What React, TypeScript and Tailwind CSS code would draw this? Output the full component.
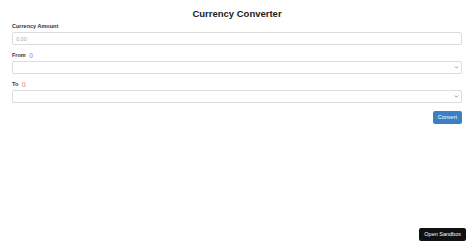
import { ChevronDown } from "lucide-react";

const font = { fontFamily: '"Liberation Sans", Arial, Helvetica, sans-serif' };

function Field({ children }: { children: React.ReactNode }) {
  return <div className="flex flex-col gap-[2px]">{children}</div>;
}

function SelectBox() {
  return (
    <div className="relative h-[13px]">
      <select className="block h-[13px] w-full appearance-none rounded-[2px] border border-[#dcdcdc] bg-white px-[3px] py-0 text-[5.5px] leading-[11px] text-gray-800 outline-none">
        <option value=""></option>
      </select>
      <ChevronDown
        className="pointer-events-none absolute right-[3px] top-[4px] h-[5px] w-[5px] text-[#555]"
        strokeWidth={3}
      />
    </div>
  );
}

export default function App() {
  return (
    <div className="h-[248px] w-full bg-white text-[#222]" style={font}>
      <div className="flex flex-col px-[12px] pt-[7px]">
        <h1 className="text-center text-[9.5px] font-bold leading-[13px] text-[#222]">
          Currency Converter
        </h1>

        <div className="mt-[2px] flex flex-col gap-[6px]">
          <Field>
            <label className="block h-[8px] text-[5.5px] font-bold leading-[8px] text-[#333]">Currency Amount</label>
            <input
              placeholder="0.00"
              className="block h-[13px] w-full rounded-[2px] border border-[#dcdcdc] px-[3px] text-[5.5px] text-gray-800 outline-none placeholder:text-[#aaa]"
            />
          </Field>

          <Field>
            <label className="block h-[8px] text-[5.5px] font-bold leading-[8px] text-[#333]">
              From <span className="ml-[2px] font-normal text-[#6a5acd]">()</span>
            </label>
            <SelectBox />
          </Field>

          <Field>
            <label className="block h-[8px] text-[5.5px] font-bold leading-[8px] text-[#333]">
              To <span className="ml-[2px] font-normal text-[#e0453a]">()</span>
            </label>
            <SelectBox />
          </Field>

          <div className="mt-[2px] flex justify-end">
            <button className="h-[13px] rounded-[2px] bg-[#3b7fc4] px-[5px] text-[5.5px] text-white">
              Convert
            </button>
          </div>
        </div>
      </div>

      <button className="fixed bottom-[7px] right-[8px] h-[13px] rounded-[2px] bg-[#111] px-[5px] text-[5.5px] text-white">
        Open Sandbox
      </button>
    </div>
  );
}
